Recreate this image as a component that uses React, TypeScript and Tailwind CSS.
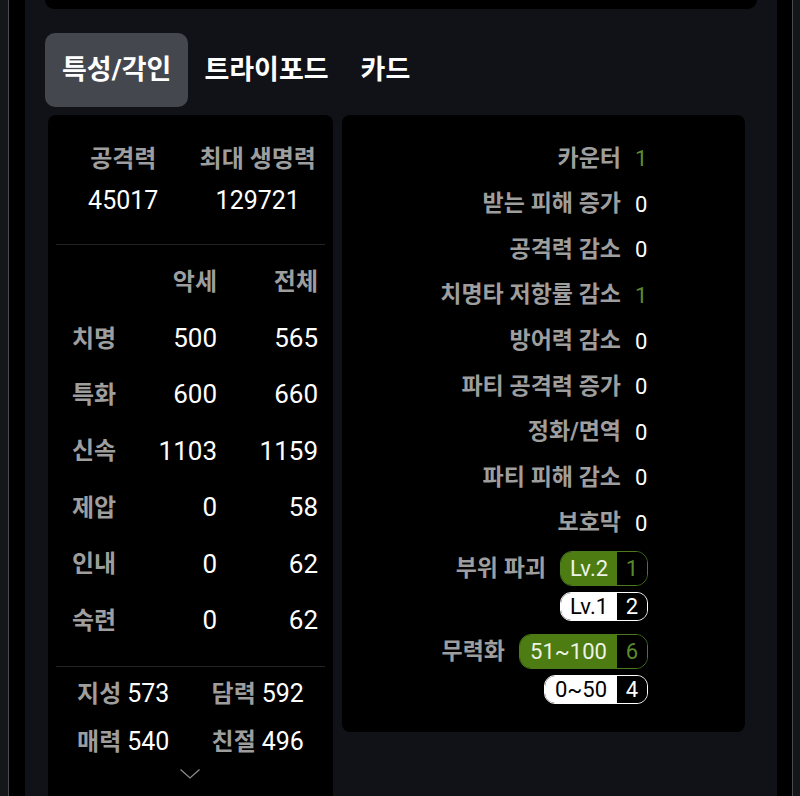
import React from "react";

const statRows = [
  { label: "치명", acc: "500", total: "565" },
  { label: "특화", acc: "600", total: "660" },
  { label: "신속", acc: "1103", total: "1159" },
  { label: "제압", acc: "0", total: "58" },
  { label: "인내", acc: "0", total: "62" },
  { label: "숙련", acc: "0", total: "62" },
];

const effects = [
  { label: "카운터", value: "1", green: true },
  { label: "받는 피해 증가", value: "0" },
  { label: "공격력 감소", value: "0" },
  { label: "치명타 저항률 감소", value: "1", green: true },
  { label: "방어력 감소", value: "0" },
  { label: "파티 공격력 증가", value: "0" },
  { label: "정화/면역", value: "0" },
  { label: "파티 피해 감소", value: "0" },
  { label: "보호막", value: "0" },
];

function GreenBadge({ text, count, w }: { text: string; count: string; w: string }) {
  return (
    <div className="flex h-[35px] rounded-[12px] border border-[#4b7a1c] overflow-hidden">
      <div className={`${w} flex items-center justify-center bg-[#4d7d12] text-[22px] text-[#eef3e6]`}>{text}</div>
      <div className="w-[30px] flex items-center justify-center bg-black text-[22px] text-[#5b8a2b]">{count}</div>
    </div>
  );
}

function WhiteBadge({ text, count, w }: { text: string; count: string; w: string }) {
  return (
    <div className="flex h-[29px] rounded-[11px] border border-white overflow-hidden">
      <div className={`${w} flex items-center justify-center bg-white text-[22px] text-black`}>{text}</div>
      <div className="w-[30px] flex items-center justify-center bg-black text-[22px] text-white">{count}</div>
    </div>
  );
}

export default function App() {
  return (
    <div className="w-[800px] h-[796px] overflow-hidden flex bg-[#15161a] font-['Roboto','Noto_Sans_CJK_KR',sans-serif]">
      <div className="w-[8px] shrink-0" />
      <div className="w-px shrink-0 bg-[#4a4b51]" />
      <div className="w-[16px] shrink-0 bg-black" />
      <main className="w-[752px] shrink-0 bg-[#111217] flex flex-col">
        <div className="shrink-0 mx-[20px] h-[9px] rounded-b-[10px] bg-black" />

        <div className="shrink-0 flex mt-[24px] ml-[20px] h-[74px]">
          <div className="flex items-center px-[17px] rounded-[10px] bg-[#45474f] text-[27px] font-bold text-white">특성/각인</div>
          <div className="flex items-center px-4 text-[27px] font-bold text-white">트라이포드</div>
          <div className="flex items-center px-4 text-[27px] font-bold text-white">카드</div>
        </div>

        <div className="shrink-0 flex items-start gap-[9px] mt-[8px] ml-[23px]">
          {/* left card */}
          <div className="w-[285px] h-[720px] shrink-0 rounded-t-[8px] bg-black">
            <div className="grid grid-cols-2 px-2 pt-[29px] pb-[27px] text-center">
              <div className="h-[30px] leading-[30px] text-[24px] font-bold text-[#9e9e9e]">공격력</div>
              <div className="h-[30px] leading-[30px] text-[24px] font-bold text-[#9e9e9e]">최대 생명력</div>
              <div className="mt-[11px] h-[32px] leading-[32px] text-[25px] text-white">45017</div>
              <div className="mt-[11px] h-[32px] leading-[32px] text-[25px] text-white">129721</div>
            </div>
            <div className="mx-2 h-px bg-[#232323]" />
            <div className="grid grid-cols-[1fr_96px_101px] pl-[24px] pr-[15px] pt-[9px] pb-[17px]">
              <div className="h-[56.4px]" />
              <div className="h-[56.4px] flex items-center justify-end text-[24px] font-bold text-[#9e9e9e]">악세</div>
              <div className="h-[56.4px] flex items-center justify-end text-[24px] font-bold text-[#9e9e9e]">전체</div>
              {statRows.map((r) => (
                <React.Fragment key={r.label}>
                  <div className="h-[56.4px] flex items-center text-[24px] font-bold text-[#9e9e9e]">{r.label}</div>
                  <div className="h-[56.4px] flex items-center justify-end text-[26px] text-white">{r.acc}</div>
                  <div className="h-[56.4px] flex items-center justify-end text-[26px] text-white">{r.total}</div>
                </React.Fragment>
              ))}
            </div>
            <div className="mx-2 h-px bg-[#232323]" />
            <div className="grid grid-cols-2 gap-y-[8px] px-2 pt-[7px]">
              {[
                ["지성", "573"],
                ["담력", "592"],
                ["매력", "540"],
                ["친절", "496"],
              ].map(([k, v]) => (
                <div key={k} className="h-[40px] flex items-center justify-center gap-[6px]">
                  <span className="text-[24px] font-bold text-[#9e9e9e]">{k}</span>
                  <span className="text-[25px] text-white">{v}</span>
                </div>
              ))}
            </div>
            <div className="flex justify-center pt-[6px] pr-[2px]">
              <svg width="22" height="12" viewBox="0 0 22 12" fill="none">
                <polyline points="1.5,1.5 11,10 20.5,1.5" stroke="#8a8a8a" strokeWidth="1.3" />
              </svg>
            </div>
          </div>

          {/* right card */}
          <div className="w-[403px] shrink-0 rounded-[8px] bg-black pt-[21px] pb-[28px] pr-[97px] flex flex-col items-end">
            {effects.map((e) => (
              <div key={e.label} className="h-[45.6px] flex items-center gap-[14px]">
                <span className="text-[23px] font-bold text-[#9e9e9e]">{e.label}</span>
                <span className={`w-[13px] text-[22px] ${e.green ? "text-[#5d8c2c]" : "text-white"}`}>{e.value}</span>
              </div>
            ))}
            <div className="mt-[5px] flex items-center gap-[14px]">
              <span className="text-[23px] font-bold text-[#9e9e9e]">부위 파괴</span>
              <GreenBadge text="Lv.2" count="1" w="w-[56px]" />
            </div>
            <div className="mt-[6px]">
              <WhiteBadge text="Lv.1" count="2" w="w-[56px]" />
            </div>
            <div className="mt-[13px] flex items-center gap-[14px]">
              <span className="text-[23px] font-bold text-[#9e9e9e]">무력화</span>
              <GreenBadge text="51~100" count="6" w="w-[97px]" />
            </div>
            <div className="mt-[6px]">
              <WhiteBadge text="0~50" count="4" w="w-[72px]" />
            </div>
          </div>
        </div>
      </main>
      <div className="w-[15px] shrink-0 bg-black" />
      <div className="w-px shrink-0 bg-[#4a4b51]" />
      <div className="flex-1" />
    </div>
  );
}
